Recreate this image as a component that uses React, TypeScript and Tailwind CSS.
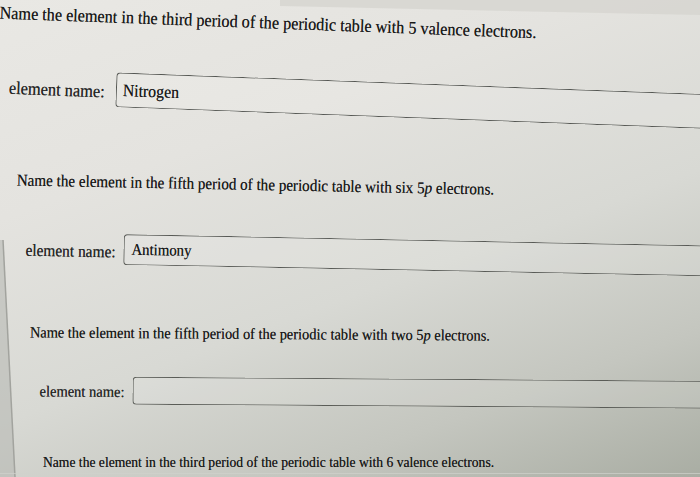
export default function App() {
  return (
    <div className="relative h-[477px] w-[700px] overflow-hidden bg-[linear-gradient(160deg,#e9e8e4_0%,#e4e3df_30%,#d8d9d4_58%,#c4c6bf_80%,#a9ada3_100%)] font-['Liberation_Serif','Times_New_Roman',serif] text-[#181818] [text-shadow:0_0_0.5px_rgba(0,0,0,0.6)]">
      {/* photo edges: top band, left bezel line, bottom edge */}
      <svg className="absolute inset-0" width="700" height="477" viewBox="0 0 700 477">
        <polygon points="280,0 700,0 700,15 280,6" fill="#d6d4d0" opacity="0.8" />
        <polygon points="0,240 3,240 15,477 0,477" fill="#b8b9b4" opacity="0.6" />
        <line x1="3" y1="240" x2="15" y2="477" stroke="#a2a39e" strokeWidth="1.5" />
        <rect x="0" y="473" width="700" height="1" fill="#d0d2cc" opacity="0.7" />
      </svg>

      <div className="relative flex flex-col">
        {/* Question 1 */}
        <div className="mt-[3px] w-[760px] origin-top-left rotate-[2.1deg]">
          <p className="origin-left scale-y-[1.1] text-[16.2px] leading-[20px] whitespace-nowrap">
            Name the element in the third period of the periodic table with 5 valence electrons.
          </p>
          <div className="mt-[45px] flex items-center">
            <span className="ml-[12px] mt-[5px] w-[107px] shrink-0 scale-y-[1.1] text-[16.4px] text-[#262626]">
              element name:
            </span>
            <div className="flex h-[35px] flex-1 items-center rounded-l-[4px] border-[1.5px] border-r-0 border-[#565854] bg-white/10 pl-[6px] text-[15.8px]">
              <span className="scale-y-[1.1]">Nitrogen</span>
            </div>
          </div>
        </div>

        {/* Question 2 */}
        <div className="ml-[17px] mt-[68px] w-[760px] origin-top-left rotate-[1.1deg]">
          <p className="origin-left scale-y-[1.1] text-[15.1px] leading-[19px] whitespace-nowrap">
            Name the element in the fifth period of the periodic table with six 5<i>p</i> electrons.
          </p>
          <div className="mt-[42px] flex items-center">
            <span className="ml-[10px] mt-[4px] w-[98px] shrink-0 scale-y-[1.1] text-[15.4px] text-[#262626]">
              element name:
            </span>
            <div className="flex h-[31px] flex-1 items-center rounded-l-[4px] border-[1.5px] border-r-0 border-[#585a56] bg-white/10 pl-[7px] text-[14.8px]">
              <span className="scale-y-[1.1]">Antimony</span>
            </div>
          </div>
        </div>

        {/* Question 3 */}
        <div className="ml-[30px] mt-[60px] w-[760px] origin-top-left rotate-[0.4deg]">
          <p className="origin-left scale-y-[1.08] text-[14.4px] leading-[18px] whitespace-nowrap">
            Name the element in the fifth period of the periodic table with two 5<i>p</i> electrons.
          </p>
          <div className="mt-[35px] flex items-center">
            <span className="ml-[10px] mt-[3px] w-[93px] shrink-0 scale-y-[1.08] text-[14.5px] text-[#262626]">
              element name:
            </span>
            <div className="h-[28px] flex-1 rounded-l-[4px] border-[1.5px] border-r-0 border-[#5a5c57] bg-white/10" />
          </div>
        </div>

        {/* Question 4 */}
        <div className="ml-[43px] mt-[50px]">
          <p className="origin-left scale-y-[1.08] text-[13.6px] leading-[17px] whitespace-nowrap">
            Name the element in the third period of the periodic table with 6 valence electrons.
          </p>
        </div>
      </div>
    </div>
  )
}
